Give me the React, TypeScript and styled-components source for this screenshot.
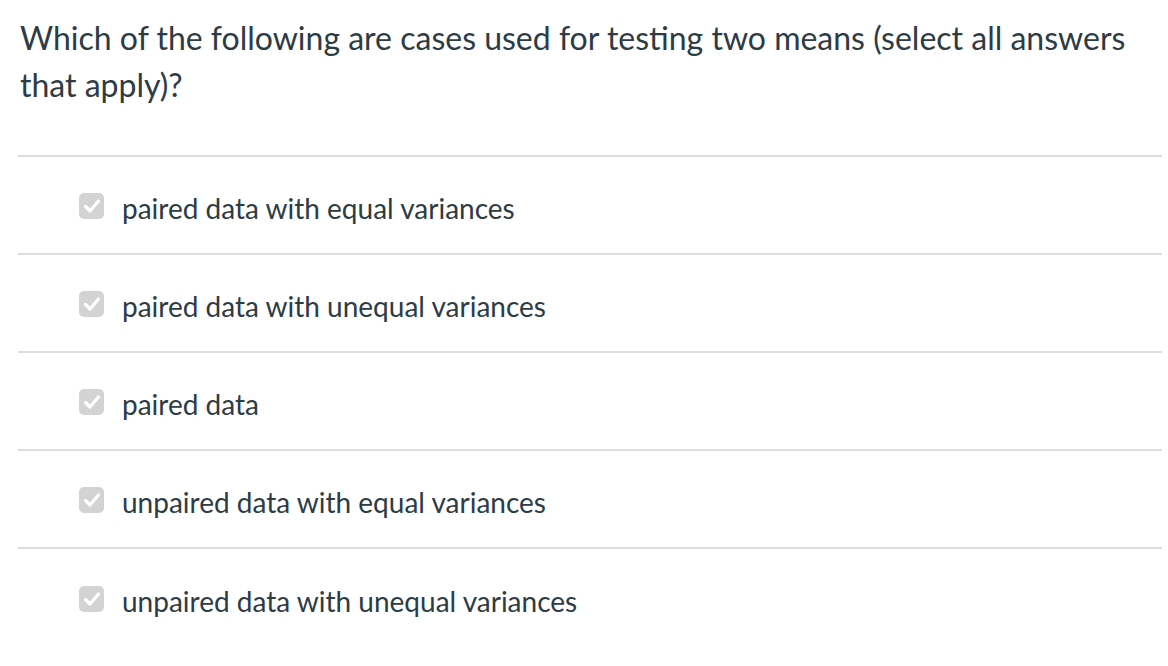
import styled, { createGlobalStyle } from "styled-components";

const GlobalStyle = createGlobalStyle`
  body {
    margin: 0;
    background: #fff;
    font-family: Lato, "Open Sans", sans-serif;
    color: #2d3b45;
  }
`;

const answers = [
  "paired data with equal variances",
  "paired data with unequal variances",
  "paired data",
  "unpaired data with equal variances",
  "unpaired data with unequal variances",
];

export default function App() {
  return (
    <>
      <GlobalStyle />
      <Question>
        <QuestionText>
          Which of the following are cases used for testing two means (select all answers
          that apply)?
        </QuestionText>
        <AnswerList>
          {answers.map((answer) => (
            <AnswerRow key={answer}>
              <Checkbox>
                <svg width="18" height="16" viewBox="0 0 18 16">
                  <path
                    d="M2.5 8.5 L7 13 L15.5 3"
                    fill="none"
                    stroke="#fff"
                    strokeWidth="3.2"
                    strokeLinecap="round"
                    strokeLinejoin="round"
                  />
                </svg>
              </Checkbox>
              <AnswerLabel>{answer}</AnswerLabel>
            </AnswerRow>
          ))}
        </AnswerList>
      </Question>
    </>
  );
}

const Question = styled.div`
  padding: 0 6px 0 18px;
`;

const QuestionText = styled.p`
  margin: 0;
  padding: 14px 0 0 2px;
  font-size: 32px;
  line-height: 47px;
  max-width: 1140px;
`;

const AnswerList = styled.div`
  margin-top: 47px;
  border-top: 2px solid #dddddd;
`;

const AnswerRow = styled.div`
  display: flex;
  align-items: center;
  height: 98px;
  padding-left: 61px;
  padding-top: 5px;
  box-sizing: border-box;
  border-bottom: 2px solid #dddddd;

  &:last-child {
    border-bottom: none;
  }
`;

const Checkbox = styled.span`
  display: flex;
  align-items: center;
  justify-content: center;
  width: 25px;
  height: 26px;
  border-radius: 5px;
  background: #d3d3d3;
  margin-right: 18px;
  margin-top: -3px;
`;

const AnswerLabel = styled.span`
  font-size: 28px;
`;
